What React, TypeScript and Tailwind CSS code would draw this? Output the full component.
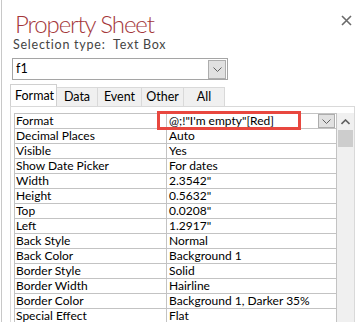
import React from "react";

const rows: [string, string][] = [
  ["Format", '@;!"I\'m empty"[Red]'],
  ["Decimal Places", "Auto"],
  ["Visible", "Yes"],
  ["Show Date Picker", "For dates"],
  ["Width", '2.3542"'],
  ["Height", '0.5632"'],
  ["Top", '0.0208"'],
  ["Left", '1.2917"'],
  ["Back Style", "Normal"],
  ["Back Color", "Background 1"],
  ["Border Style", "Solid"],
  ["Border Width", "Hairline"],
  ["Border Color", "Background 1, Darker 35%"],
  ["Special Effect", "Flat"],
];

function Chevron({ className = "" }: { className?: string }) {
  return (
    <svg width="9" height="5" viewBox="0 0 9 5" className={className}>
      <path d="M0.5 0.5 L4.5 4.5 L8.5 0.5" fill="none" stroke="#606060" strokeWidth="1" />
    </svg>
  );
}

export default function App() {
  const tabs = ["Data", "Event", "Other", "All"];
  const tabW = [41, 44, 42, 41];
  return (
    <div className="w-[357px] h-[322px] overflow-hidden bg-white pl-px" style={{ fontFamily: "Lato, 'Liberation Sans', sans-serif" }}>
      <div className="h-full border-l border-[#c8c8c8] relative">
        {/* title */}
        <div className="flex items-start justify-between h-[38px] pl-[13px] pr-[4px]">
          <div className="text-[24px] leading-[26px] font-light text-[#a4373a] mt-[11px] tracking-[-1.1px]">Property Sheet</div>
          <svg width="11" height="11" viewBox="0 0 11 11" className="mt-[15px] mr-[1px]">
            <path d="M1 1 L10 10 M10 1 L1 10" stroke="#6a6a6a" strokeWidth="1.6" />
          </svg>
        </div>
        <div className="pl-[11px] text-[12.5px] leading-[14px] text-[#444] h-[20px] tracking-[0.75px] whitespace-pre">
          Selection type:  Text Box
        </div>
        {/* combo */}
        <div className="ml-[10px] w-[216px] h-[22px] border border-[#a5a5a5] flex items-center justify-between pl-[3px] pr-px">
          <span className="text-[12.5px] text-black">f1</span>
          <div className="w-[18px] h-[19px] bg-[#e1e1e1] border border-[#adadad] flex items-center justify-center">
            <Chevron />
          </div>
        </div>
        {/* tabs */}
        <div className="flex items-end ml-[8px] mt-[5px] h-[21px]">
          <div className="w-[47px] h-[22px] bg-white border border-b-0 border-[#d0d0d0] relative z-10 flex items-start pl-[4px] pt-[2px] text-[12.5px] text-black">
            Format
          </div>
          {tabs.map((t, i) => (
            <div
              key={t}
              style={{ width: tabW[i] }}
              className="h-[19px] bg-[#f0f0f0] border border-l-0 border-b-0 border-[#d9d9d9] flex items-center justify-center text-[12.5px] text-black"
            >
              {t}
            </div>
          ))}
        </div>
        {/* panel */}
        <div className="ml-[8px] w-[345px] h-[300px] border border-[#d9d9d9] pt-[6px] pl-[3px] flex relative">
          <div className="w-[323px] border-l border-t border-r border-[#c3c3c3] relative h-fit">
            {rows.map(([k, v], i) => (
              <div key={k} className="flex h-[15px] border-b border-[#c3c3c3] text-[12px] leading-[14px] text-black">
                <div className="w-[152px] border-r border-[#c3c3c3] pl-[1px] whitespace-nowrap">{k}</div>
                <div className="flex-1 pl-[2px] flex items-start justify-between whitespace-nowrap">
                  <span>{v}</span>
                  {i === 0 && (
                    <div className="w-[17px] h-[14px] bg-[#e1e1e1] border border-[#adadad] flex items-center justify-center mr-px">
                      <Chevron />
                    </div>
                  )}
                </div>
              </div>
            ))}
            <div className="absolute left-[142px] top-[-3px] w-[144px] h-[19px] border-[3px] border-[#e8473f] pointer-events-none" />
          </div>
          <div className="w-[17px] bg-[#f0f0f0] h-full flex flex-col items-center">
            <svg width="9" height="6" viewBox="0 0 9 6" className="mt-[6px]">
              <path d="M0.5 5 L4.5 1 L8.5 5" fill="none" stroke="#606060" strokeWidth="1.6" />
            </svg>
            <div className="w-[15px] h-[17px] bg-[#cdcdcd] mt-[5px]" />
          </div>
        </div>
      </div>
    </div>
  );
}
